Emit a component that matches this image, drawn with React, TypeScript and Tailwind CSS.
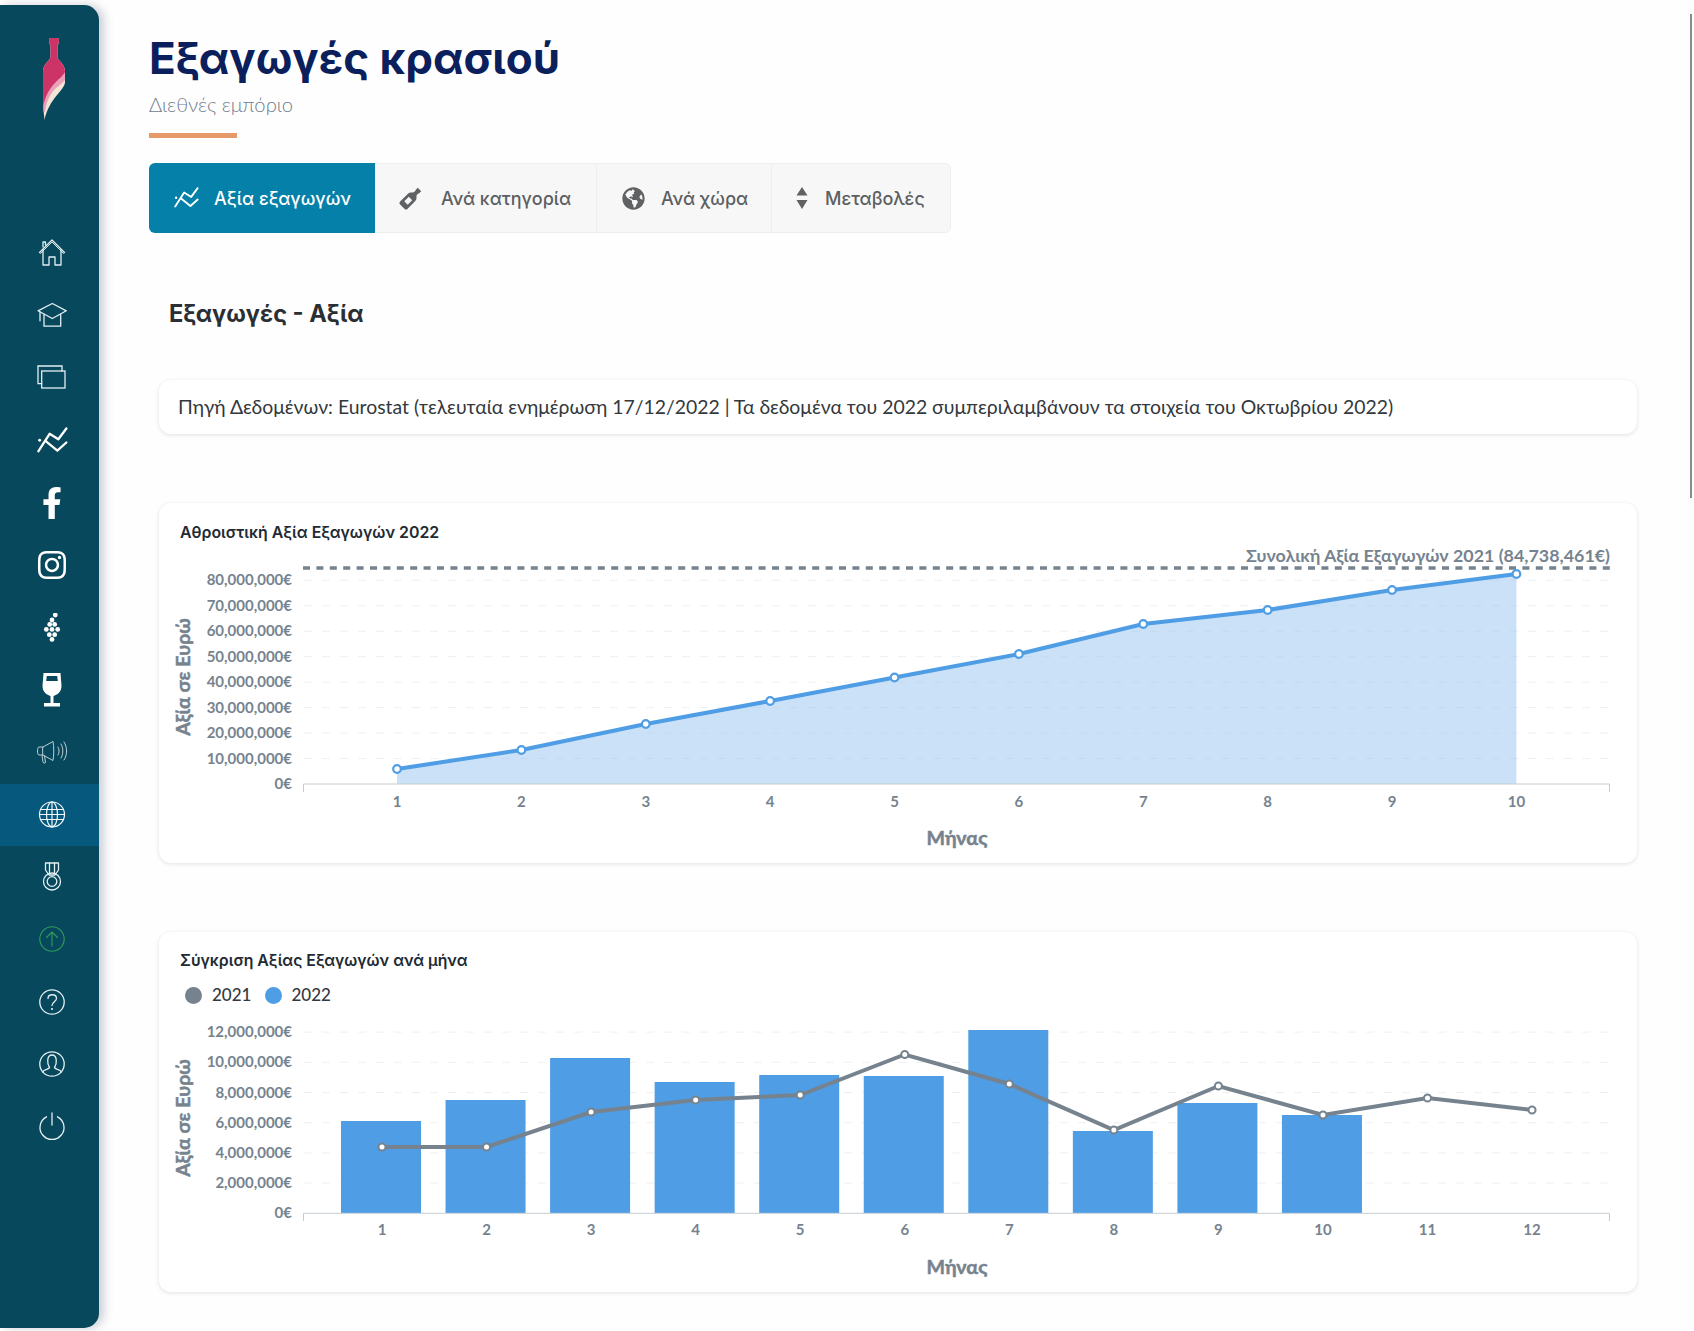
import React from "react";
import { FaFacebookF, FaInstagram, FaGlobeAmericas } from "react-icons/fa";

const GRAY = "#76838f";
const labelCls = "font-['Lato'] font-bold fill-[#76838f]";
const axisCls = "font-['Lato'] font-bold fill-[#76838f] stroke-[#76838f] stroke-[0.5px]";

function Logo() {
  const sil =
    "M8 0 H14 Q16 0 16 3 Q16 6 14.5 7 V18 C14.5 24 22 24 22 34 V44 C22 52 6 60 1.5 82 C0 70 0 60 0 50 V34 C0 24 7.5 24 7.5 18 V7 Q6 6 6 3 Q6 0 8 0Z";
  return (
    <svg width="22" height="82" viewBox="0 0 22 82">
      <defs>
        <clipPath id="bottle">
          <path d={sil} />
        </clipPath>
      </defs>
      <path d={sil} fill="#f3e6d6" />
      <g clipPath="url(#bottle)">
        <path d="M0 30 H22 V42 C16 50 6 50 2 74 L0 74Z" fill="#e9a0b8" />
        <path d="M0 0 H22 V34 C18 42 4 46 0 70 Z" fill="#cc3366" />
      </g>
    </svg>
  );
}

const stroke = { fill: "none", stroke: "#e4eff3", strokeWidth: 1.3, strokeLinejoin: "round" as const, strokeLinecap: "round" as const };

const Ic = ({ children, s = 30 }: { children: React.ReactNode; s?: number }) => (
  <svg width={s} height={s} viewBox="0 0 30 30">
    {children}
  </svg>
);

function HomeI() {
  return (
    <Ic>
      <g {...stroke}>
        <path d="M2.5 14.5 L15 2 L27.5 14.5" />
        <path d="M3.5 15.5 L15 4 L26.5 15.5" strokeWidth={0.9} />
        <path d="M6 12 V27 H12 V19 H18 V27 H24 V12" />
        <path d="M6 9 V4 H8.5 V7" />
      </g>
    </Ic>
  );
}
function CapI() {
  return (
    <Ic>
      <g {...stroke}>
        <path d="M15.3 2.5 L29.3 9.8 L15.3 17.5 L1 9.8 Z" />
        <path d="M3 11 V19.8 M7 13.5 V25.2 H23.7 V13.5" />
      </g>
    </Ic>
  );
}
function WinI() {
  return (
    <Ic>
      <g {...stroke} strokeLinejoin="miter">
        <path d="M4.7 20.6 H1 V3 H25 V8" />
        <rect x="4.7" y="8" width="23.3" height="17" />
      </g>
    </Ic>
  );
}
function TrendI({ c = "#fff", w = 31 }: { c?: string; w?: number }) {
  return (
    <svg width={w} height={(w * 27) / 32} viewBox="-1 -1 32 27">
      <g fill="none" stroke={c} strokeWidth={2.4} strokeLinecap="round" strokeLinejoin="round">
        <path d="M0.5 24 L12 6 L21 11.7 L29.3 0.5" />
        <path d="M7.7 13.3 L20 23.3 L29.3 15" />
      </g>
      <circle cx="1.7" cy="12.7" r="1.5" fill={c} />
    </svg>
  );
}
function GrapeI() {
  const pts: [number, number][] = [
    [18.3, 2],
    [15, 7],
    [12.7, 11.4],
    [17.7, 11.4],
    [9.3, 16.4],
    [15, 16.4],
    [20.7, 16.4],
    [12.3, 21.7],
    [17.7, 21.7],
    [15, 26.4],
  ];
  return (
    <Ic>
      {pts.map(([x, y], i) => (
        <circle key={i} cx={x} cy={y} r={2.4} fill="#fff" />
      ))}
    </Ic>
  );
}
function GlassI() {
  return (
    <svg width="30" height="36" viewBox="0 0 30 36">
      <path
        fillRule="evenodd"
        d="M6.5 1 H23.5 L24.5 14 C24.5 20 20 23 16.5 24 V31 H23 V34.5 H7 V31 H13.5 V24 C10 23 5.5 20 5.5 14 Z M9.8 4 L9.2 9 H20.8 L20.2 4 Z"
        fill="#fff"
      />
    </svg>
  );
}
function MegaI() {
  return (
    <svg width="32" height="24" viewBox="0 0 32 24">
      <g fill="none" stroke="#cfdde3" strokeWidth={0.9} strokeLinecap="round" strokeLinejoin="round">
        <path d="M7 7 H3 C1 7 1 15 3 15 H7" />
        <path d="M7 7 L17 1.5 C18 6 18 16 17 20.5 L7 15 Z" />
        <path d="M6 15.5 L7 22 C7.5 23.5 9.5 23.5 9.5 22 L8.5 16" />
        <path d="M22 7 C23.5 9 23.5 13 22 15" />
        <path d="M25 4 C27.5 8 27.5 14 25 18" />
        <path d="M28 2 C31.5 7 31.5 15 28 20" />
      </g>
    </svg>
  );
}
function GlobeI() {
  return (
    <Ic>
      <g {...stroke} strokeWidth={1.2} stroke="#f2f7f9">
        <circle cx="15" cy="14.5" r="12.5" />
        <ellipse cx="15" cy="14.5" rx="5.5" ry="12.5" />
        <path d="M15 2 V27 M3.5 9.5 H26.5 M2.5 14.5 H27.5 M3.5 19.5 H26.5" />
      </g>
    </Ic>
  );
}
function MedalI() {
  return (
    <Ic>
      <g {...stroke}>
        <path d="M8.5 1 H21.5 V8 L18 13 H12 L8.5 8 Z" />
        <path d="M12.5 1 V12 M17.5 1 V12" />
        <circle cx="15" cy="19.5" r="8.5" />
        <circle cx="15" cy="19.5" r="4.8" />
      </g>
    </Ic>
  );
}
function UpI() {
  return (
    <Ic>
      <g fill="none" stroke="#2f9e5b" strokeWidth={1.1} strokeLinecap="round" strokeLinejoin="round">
        <circle cx="15" cy="15" r="12.2" />
        <path d="M15 22 V8 M9.5 13.5 L15 8 L20.5 13.5" />
      </g>
    </Ic>
  );
}
function HelpI() {
  return (
    <Ic>
      <g {...stroke}>
        <circle cx="15" cy="15" r="12.2" />
        <path d="M11 11.5 C11 6.5 19.5 6.5 19.5 11.5 C19.5 14.5 15 15 15 18.5" />
      </g>
      <circle cx="15" cy="22" r="1.1" fill="#e4eff3" />
    </Ic>
  );
}
function UserI() {
  return (
    <Ic>
      <g {...stroke}>
        <circle cx="15" cy="15" r="12.2" />
        <path d="M5.5 23 C7 20 12 20.5 12.5 18.5 C10 15 9.5 6 15 6 C20.5 6 20 15 17.5 18.5 C18 20.5 23 20 24.5 23" />
      </g>
    </Ic>
  );
}
function PowerI() {
  return (
    <Ic>
      <g {...stroke}>
        <path d="M9.5 4.8 A12 12 0 1 0 20.5 4.8" />
        <path d="M15 1 V13" />
      </g>
    </Ic>
  );
}

const NAV: { el: React.ReactNode; active?: boolean }[] = [
  { el: <HomeI /> },
  { el: <CapI /> },
  { el: <WinI /> },
  { el: <TrendI /> },
  { el: <FaFacebookF className="text-white" size={32} /> },
  { el: <FaInstagram className="text-white" size={32} /> },
  { el: <GrapeI /> },
  { el: <GlassI /> },
  { el: <MegaI /> },
  { el: <GlobeI />, active: true },
  { el: <MedalI /> },
  { el: <UpI /> },
  { el: <HelpI /> },
  { el: <UserI /> },
  { el: <PowerI /> },
];

function Sidebar() {
  return (
    <aside className="w-[99px] h-[1323px] mt-[5px] shrink-0 rounded-r-[15px] bg-[#07485c] shadow-[5px_0_10px_rgba(90,100,130,0.3)] flex flex-col">
      <div className="flex justify-center pl-[9px] pt-[33px] h-[217px]">
        <Logo />
      </div>
      <nav className="flex flex-col">
        {NAV.map((n, i) => (
          <div
            key={i}
            className={`h-[62.4px] pl-[5px] flex items-center justify-center ${n.active ? "bg-[#06597d]" : ""}`}
          >
            {n.el}
          </div>
        ))}
      </nav>
    </aside>
  );
}

function BottleI() {
  return (
    <svg width="27" height="27" viewBox="-5 -5 34 34">
      <g transform="rotate(45 12 12)">
        <path
          d="M9 -4 H15 V0 H14.5 V3 C14.5 5 18.5 6 18.5 10 V24 C18.5 25.5 17.5 26.5 16 26.5 H8 C6.5 26.5 5.5 25.5 5.5 24 V10 C5.5 6 9.5 5 9.5 3 V0 H9 Z"
          fill="#5f6163"
        />
        <rect x="9" y="12" width="6" height="8" fill="#f7f7f7" />
      </g>
    </svg>
  );
}
function SortI() {
  return (
    <svg width="12" height="24" viewBox="0 0 12 24">
      <path d="M6 1 L11.5 9.5 H0.5 Z M0.5 14 H11.5 L6 23 Z" fill="#5f6163" />
    </svg>
  );
}

function Tabs() {
  const tab = "flex items-center text-[18px] font-medium";
  return (
    <div className="w-[802px] h-[70px] mt-[25px] flex rounded-[6px] border border-[#eeeeee] bg-[#f7f7f7] text-[#5c5f62] font-['Inter']">
      <div className={`${tab} w-[226px] -ml-px -my-px h-[70px] rounded-l-[6px] bg-[#0580a8] text-white pl-[25px] gap-[15px]`}>
        <TrendI w={25} />
        <span className="pt-[1px]">Αξία εξαγωγών</span>
      </div>
      <div className={`${tab} w-[222px] h-full pl-[22px] gap-[17px] border-r border-[#eeeeee]`}>
        <BottleI />
        <span className="pt-[1px]">Ανά κατηγορία</span>
      </div>
      <div className={`${tab} w-[175px] h-full pl-[25px] gap-[16px] border-r border-[#eeeeee]`}>
        <FaGlobeAmericas size={23} className="text-[#5f6163]" />
        <span className="pt-[1px]">Ανά χώρα</span>
      </div>
      <div className={`${tab} flex-1 h-full pl-[24px] gap-[17px]`}>
        <SortI />
        <span className="pt-[1px]">Μεταβολές</span>
      </div>
    </div>
  );
}

const Card = ({ className, children }: { className: string; children: React.ReactNode }) => (
  <div className={`w-[1478px] rounded-[12px] bg-white shadow-[0_1px_4px_rgba(0,0,0,0.12)] ${className}`}>{children}</div>
);

function Chart1() {
  const xs = Array.from({ length: 10 }, (_, i) => 397 + i * 124.38);
  const ys = [769, 750, 724, 701, 677.5, 654, 624, 610, 590, 574];
  const pts = xs.map((x, i) => `${x},${ys[i]}`).join(" ");
  const labels = ["0€", "10,000,000€", "20,000,000€", "30,000,000€", "40,000,000€", "50,000,000€", "60,000,000€", "70,000,000€", "80,000,000€"];
  return (
    <svg className="block" width="1478" height="321" viewBox="159 542 1478 321">
      {labels.map((l, i) => {
        const y = 784 - i * 25.46;
        return (
          <g key={l}>
            {i > 0 && <line x1="304" x2="1610" y1={y} y2={y} stroke="#eeeff1" strokeDasharray="8 10" strokeWidth="1" />}
            <text x="292" y={y + 5} textAnchor="end" fontSize="15" className={labelCls}>
              {l}
            </text>
          </g>
        );
      })}
      <polygon points={`397,784 ${pts} 1516.4,784`} fill="#9fc8f0" fillOpacity="0.55" />
      <line x1="303" x2="1610" y1="568" y2="568" stroke={GRAY} strokeWidth="3.6" strokeDasharray="7 6.4" />
      <text x="1610" y="562" textAnchor="end" fontSize="17.85" className={labelCls}>
        Συνολική Αξία Εξαγωγών 2021 (84,738,461€)
      </text>
      <path d="M303.5 792 V784 H1609.5 V792" fill="none" stroke="#c3ccd5" strokeWidth="1" />
      <polyline points={pts} fill="none" stroke="#4f9de4" strokeWidth="4" />
      {xs.map((x, i) => (
        <g key={i}>
          <circle cx={x} cy={ys[i]} r="3.8" fill="#fff" stroke="#4f9de4" strokeWidth="2.2" />
          <text x={x} y="807" textAnchor="middle" fontSize="15" className={labelCls}>
            {i + 1}
          </text>
        </g>
      ))}
      <text x="957" y="845" textAnchor="middle" fontSize="19.6" className={axisCls}>
        Μήνας
      </text>
      <text transform="translate(190 677) rotate(-90)" textAnchor="middle" fontSize="19.6" className={axisCls}>
        Αξία σε Ευρώ
      </text>
    </svg>
  );
}

function Chart2() {
  const xs = Array.from({ length: 12 }, (_, i) => 382 + i * 104.55);
  const tops = [1121, 1100, 1058, 1082, 1075, 1076, 1030, 1131, 1103, 1115];
  const ys = [1147, 1147, 1112, 1100, 1095, 1054.5, 1084, 1130, 1086, 1115, 1098, 1110];
  const labels = ["0€", "2,000,000€", "4,000,000€", "6,000,000€", "8,000,000€", "10,000,000€", "12,000,000€"];
  return (
    <svg className="block" width="1478" height="280" viewBox="159 1012 1478 280">
      {labels.map((l, i) => {
        const y = 1213.3 - i * 30.2;
        return (
          <g key={l}>
            {i > 0 && <line x1="304" x2="1610" y1={y} y2={y} stroke="#eeeff1" strokeDasharray="8 10" strokeWidth="1" />}
            <text x="292" y={y + 5} textAnchor="end" fontSize="15" className={labelCls}>
              {l}
            </text>
          </g>
        );
      })}
      {tops.map((t, i) => (
        <rect key={i} x={xs[i] - 41} y={t} width="80" height={1213 - t} fill="#4f9de4" />
      ))}
      <path d="M303.5 1221 V1213.3 H1609.5 V1221" fill="none" stroke="#c3ccd5" strokeWidth="1" />
      <polyline points={xs.map((x, i) => `${x},${ys[i]}`).join(" ")} fill="none" stroke={GRAY} strokeWidth="4" />
      {xs.map((x, i) => (
        <g key={i}>
          <circle cx={x} cy={ys[i]} r="3.5" fill="#fff" stroke={GRAY} strokeWidth="2" />
          <text x={x} y="1234.5" textAnchor="middle" fontSize="15" className={labelCls}>
            {i + 1}
          </text>
        </g>
      ))}
      <text x="957" y="1274" textAnchor="middle" fontSize="19.6" className={axisCls}>
        Μήνας
      </text>
      <text transform="translate(190 1118) rotate(-90)" textAnchor="middle" fontSize="19.6" className={axisCls}>
        Αξία σε Ευρώ
      </text>
    </svg>
  );
}

export default function App() {
  return (
    <div className="relative w-[1694px] h-[1331px] overflow-hidden bg-[#fefefe] flex">
      <Sidebar />
      <main className="flex-1 pl-[50px] flex flex-col items-start">
        <h1 className="mt-[28px] text-[44px] leading-[60px] font-bold text-[#0a1f5c] font-['Inter']">
          Εξαγωγές κρασιού
        </h1>
        <p className="mt-[3px] text-[20.2px] leading-[26px] font-light text-[#6f7c8b] font-['Lato']">
          Διεθνές εμπόριο
        </p>
        <div className="mt-[16px] w-[88px] h-[5px] bg-[#e69a67]" />
        <Tabs />
        <h2 className="mt-[62px] ml-[20px] text-[23.6px] leading-[38px] font-bold text-[#2b2f33] font-['Inter']">
          Εξαγωγές - Αξία
        </h2>
        <div className="ml-[10px] mt-[47px] flex flex-col font-['Lato']">
          <Card className="h-[54px] flex items-center pl-[19px] text-[19.4px] text-[#33383d]">
            Πηγή Δεδομένων: Eurostat (τελευταία ενημέρωση 17/12/2022 | Τα δεδομένα του 2022 συμπεριλαμβάνουν τα στοιχεία του Οκτωβρίου 2022)
          </Card>
          <Card className="h-[360px] mt-[69px]">
            <h3 className="h-[39px] pt-[20px] pl-[21px] text-[15.9px] leading-[20px] font-semibold text-[#222a33] font-['Inter']">
              Αθροιστική Αξία Εξαγωγών 2022
            </h3>
            <Chart1 />
          </Card>
          <Card className="h-[360px] mt-[69px]">
            <div className="h-[80px]">
              <h3 className="pt-[18px] pl-[21px] text-[15.8px] leading-[22px] font-semibold text-[#222a33] font-['Inter']">
                Σύγκριση Αξίας Εξαγωγών ανά μήνα
              </h3>
              <div className="mt-[10px] pl-[26px] flex items-center text-[17px] leading-[26px] font-medium text-[#33383d]">
                <span className="w-[17px] h-[17px] rounded-full bg-[#76838f]" />
                <span className="ml-[10px]">2021</span>
                <span className="ml-[14px] w-[17px] h-[17px] rounded-full bg-[#4f9de4]" />
                <span className="ml-[9px]">2022</span>
              </div>
            </div>
            <Chart2 />
          </Card>
        </div>
      </main>
      <div className="absolute left-[1690px] top-[14px] w-[2px] h-[484px] bg-[#8a8a8a]" />
    </div>
  );
}
